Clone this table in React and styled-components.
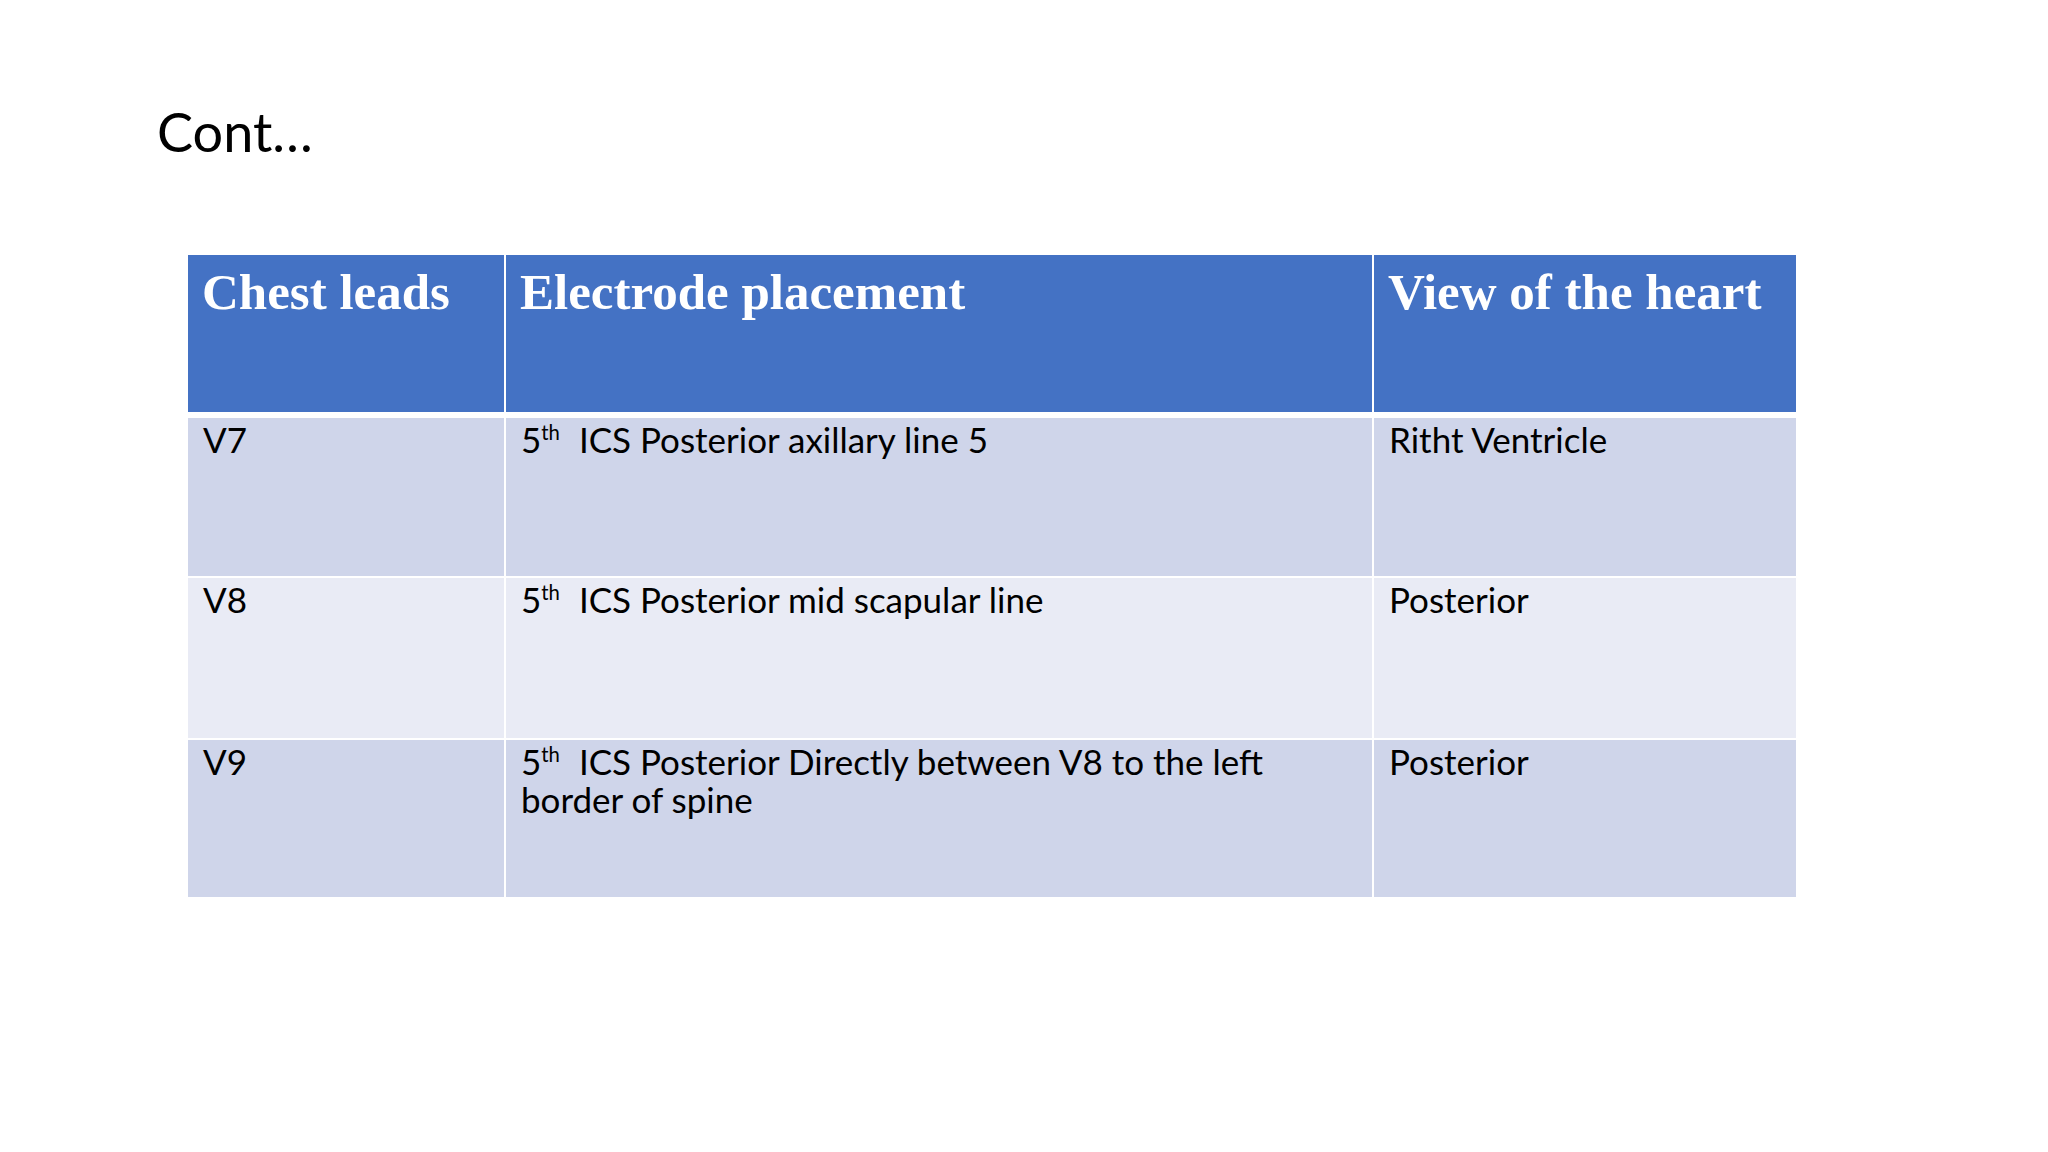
import React from "react";
import styled, { createGlobalStyle } from "styled-components";

const GlobalStyle = createGlobalStyle`
  html, body {
    margin: 0;
    padding: 0;
    background: #ffffff;
  }
`;

const Slide = styled.div`
  width: 2048px;
  height: 1152px;
  box-sizing: border-box;
  padding: 97px 0 0 0;
  background: #ffffff;
  font-family: "Lato", "Open Sans", sans-serif;
  color: #000000;
`;

const Title = styled.h1`
  margin: 0 0 88px 157px;
  font-family: "Lato", "Open Sans", sans-serif;
  font-weight: 400;
  font-size: 54px;
  line-height: 70px;
  color: #000000;
`;

const Table = styled.div`
  margin-left: 188px;
  width: 1608px;
  display: flex;
  flex-direction: column;
  gap: 2px;
  background: #ffffff;
`;

const Row = styled.div`
  display: grid;
  grid-template-columns: 316px 866px 422px;
  column-gap: 2px;
  height: ${(p) => p.height}px;
  margin-bottom: ${(p) => (p.header ? 4 : 0)}px;
`;

const HeadCell = styled.div`
  background: #4472c4;
  color: #ffffff;
  padding: 7px 16px 0 14px;
  font-family: "Liberation Serif", "Times New Roman", serif;
  font-weight: 700;
  font-size: 51px;
  line-height: 60px;
`;

const Cell = styled.div`
  background: ${(p) => (p.light ? "#e9ebf5" : "#cfd5ea")};
  padding: 2px 16px 0 15px;
  font-family: "Lato", "Open Sans", sans-serif;
  font-size: 35px;
  line-height: 38px;
  color: #000000;
`;

const Sup = styled.sup`
  font-size: 0.58em;
  line-height: 0;
  vertical-align: 0.62em;
  margin-right: 10px;
`;

const rows = [
  { lead: "V7", place: "ICS Posterior axillary line 5", view: "Ritht Ventricle", height: 158 },
  { lead: "V8", place: "ICS Posterior mid scapular line", view: "Posterior", height: 160, light: true },
  {
    lead: "V9",
    place: "ICS Posterior Directly between V8 to the left border of spine",
    view: "Posterior",
    height: 157,
  },
];

const App = () => {
  return (
    <Slide>
      <GlobalStyle />
      <Title>Cont…</Title>
      <Table>
        <Row header height={157}>
          <HeadCell>Chest leads</HeadCell>
          <HeadCell>Electrode placement</HeadCell>
          <HeadCell>View of the heart</HeadCell>
        </Row>
        {rows.map((r) => (
          <Row key={r.lead} height={r.height}>
            <Cell light={r.light}>{r.lead}</Cell>
            <Cell light={r.light}>
              5<Sup>th</Sup> {r.place}
            </Cell>
            <Cell light={r.light}>{r.view}</Cell>
          </Row>
        ))}
      </Table>
    </Slide>
  );
};

export default App;
